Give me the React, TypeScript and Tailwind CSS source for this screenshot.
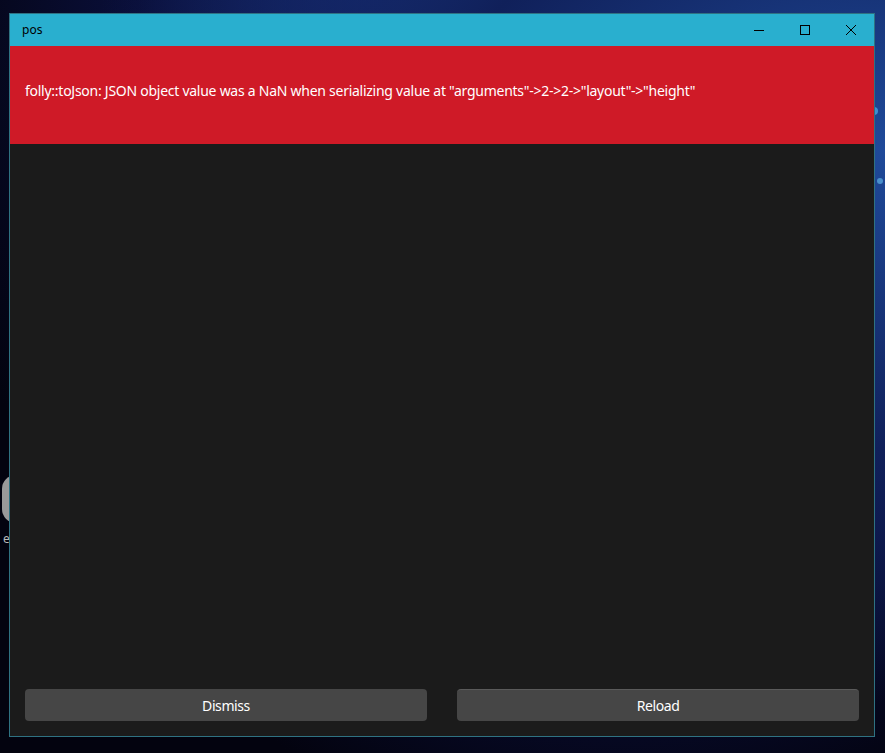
import React from "react";

export default function App() {
  return (
    <div
      className="relative w-[885px] h-[753px] overflow-hidden bg-[#03030f]"
      style={{ fontFamily: '"Noto Sans", "Open Sans", sans-serif' }}
    >
      {/* wallpaper */}
      <div className="absolute inset-0 bg-[radial-gradient(ellipse_at_70%_0%,#2a5ab0_0%,#18307a_30%,#0a0f3a_55%,#03030f_80%)]" />
      <div className="absolute inset-0 bg-[radial-gradient(ellipse_at_100%_20%,#1f4a9a_0%,#10205a_35%,transparent_65%)]" />
      <div className="absolute left-[2px] top-[475px] w-[14px] h-[48px] rounded-l-full bg-[#9a9a9a]" />
      <div className="absolute left-[3px] top-[533px] text-[12px] leading-none text-[#bbbbbb]">e</div>
      <div className="absolute left-[870px] top-[107px] w-[8px] h-[8px] rounded-full bg-[#3f8fd0]" />
      <div className="absolute left-[877px] top-[178px] w-[6px] h-[6px] rounded-full bg-[#4a90cc]" />

      {/* window */}
      <div className="absolute left-[9px] top-[13px] w-[866px] h-[724px] border border-[#2f7282] flex flex-col bg-[#1b1b1b]">
        <div className="h-[32px] bg-[#29afcf] flex items-center justify-between shrink-0">
          <span className="pl-[12px] text-[12px] text-black">pos</span>
          <div className="flex h-full">
            <div className="w-[46px] h-full flex items-center justify-center">
              <svg width="10" height="10" viewBox="0 0 10 10">
                <line x1="0" y1="5.5" x2="10" y2="5.5" stroke="#000" strokeWidth="1" />
              </svg>
            </div>
            <div className="w-[46px] h-full flex items-center justify-center">
              <svg width="10" height="10" viewBox="0 0 10 10">
                <rect x="0.5" y="0.5" width="9" height="9" fill="none" stroke="#000" strokeWidth="1" />
              </svg>
            </div>
            <div className="w-[46px] h-full flex items-center justify-center">
              <svg width="10" height="10" viewBox="0 0 10 10">
                <path d="M0 0 L10 10 M10 0 L0 10" stroke="#000" strokeWidth="1" />
              </svg>
            </div>
          </div>
        </div>
        <div className="h-[98px] bg-[#cf1a27] flex items-center pl-[15px] pb-[9px] shrink-0">
          <span className="text-[14px] text-white tracking-[-0.26px]">
            folly::toJson: JSON object value was a NaN when serializing value at "arguments"-&gt;2-&gt;2-&gt;"layout"-&gt;"height"
          </span>
        </div>
        <div className="flex-1 flex flex-col justify-end px-[15px] pb-[15px]">
          <div className="flex gap-[30px]">
            <button className="flex-1 h-[32px] rounded-[4px] bg-[#464646] text-white text-[14px] tracking-[-0.4px]">
              Dismiss
            </button>
            <button className="flex-1 h-[32px] rounded-[4px] bg-[#464646] text-white text-[14px] tracking-[-0.4px] border-t border-[#5a5a5a]">
              Reload
            </button>
          </div>
        </div>
      </div>
    </div>
  );
}
